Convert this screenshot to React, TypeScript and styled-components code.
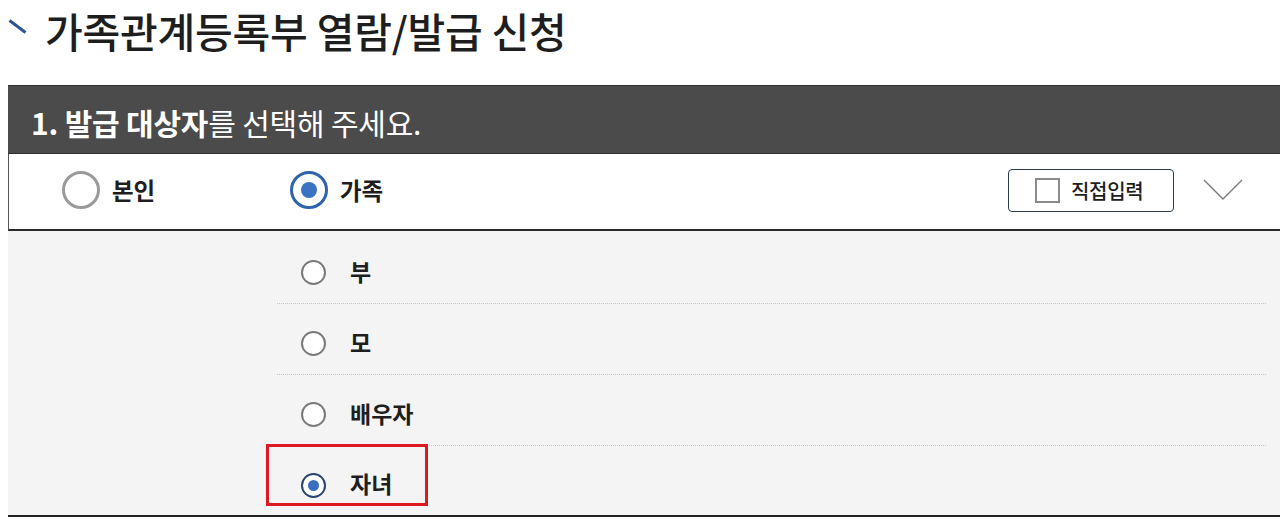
import React from "react";
import styled, { createGlobalStyle } from "styled-components";

const GlobalStyle = createGlobalStyle`
  html, body { margin: 0; padding: 0; background: #ffffff; }
  body {
    font-family: "Noto Sans CJK KR", "Noto Sans", "Liberation Sans", sans-serif;
    color: #1a1a1a;
  }
  * { box-sizing: border-box; }
`;

const Page = styled.div`
  width: 1280px;
  height: 519px;
  overflow: hidden;
  padding-left: 8px;
`;

const TitleRow = styled.div`
  height: 85px;
  display: flex;
  align-items: flex-start;
`;

const TitleMark = styled.svg`
  width: 20px;
  height: 16px;
  margin-top: 19px;
  margin-right: 17px;
  flex: none;
`;

const Title = styled.h1`
  margin: 0;
  font-size: 41px;
  line-height: 60px;
  font-weight: 500;
  letter-spacing: -0.2px;
  color: #1e1e1e;
  white-space: nowrap;
`;

const Section = styled.section`
  display: flex;
  flex-direction: column;
`;

const SectionHeader = styled.div`
  height: 69px;
  background: #4b4b4b;
  border-top: 1px solid #2e2e2e;
  border-bottom: 1px solid #2e2e2e;
  display: flex;
  align-items: center;
  padding-left: 23px;
  padding-top: 4px;
  color: #ffffff;
  font-size: 30px;
  font-weight: 400;
  letter-spacing: -0.2px;
  b { font-weight: 700; }
`;

const MainRow = styled.div`
  height: 77px;
  background: #ffffff;
  border-left: 1px solid #555;
  border-bottom: 2px solid #2a2a2a;
  display: flex;
  align-items: center;
  padding-left: 53px;
  padding-right: 37px;
  padding-bottom: 3px;
`;

const MainOption = styled.label`
  width: 228px;
  display: flex;
  align-items: center;
  gap: 12px;
  font-size: 23.5px;
  font-weight: 700;
  color: #1e1e1e;
`;

const BigRadio = styled.span<{ $checked?: boolean }>`
  width: 38px;
  height: 38px;
  border-radius: 50%;
  border: 3px solid ${(p) => (p.$checked ? "#2f63ad" : "#9a9a9a")};
  display: flex;
  align-items: center;
  justify-content: center;
  flex: none;
  &::after {
    content: "";
    display: ${(p) => (p.$checked ? "block" : "none")};
    width: 16px;
    height: 16px;
    border-radius: 50%;
    background: #3a72c4;
  }
`;

const DirectButton = styled.button`
  margin-left: auto;
  width: 166px;
  height: 43px;
  border: 1px solid #2c3d4f;
  border-radius: 4px;
  background: #ffffff;
  display: flex;
  align-items: center;
  padding: 0 0 0 26px;
  gap: 11px;
  font-family: inherit;
  font-size: 20px;
  font-weight: 500;
  color: #1e1e1e;
  letter-spacing: -0.3px;
`;

const CheckBox = styled.span`
  width: 25px;
  height: 25px;
  border: 2px solid #8a8a8a;
  background: #fff;
  flex: none;
`;

const Chevron = styled.svg`
  width: 40px;
  height: 22px;
  margin-left: 29px;
  flex: none;
`;

const SubPanel = styled.div`
  background: #f4f4f4;
  padding: 2px 14px 0 269px;
  border-bottom: 2px solid #222;
  display: flex;
  flex-direction: column;
`;

const SubRow = styled.div<{ $last?: boolean }>`
  position: relative;
  height: ${(p) => (p.$last ? "69px" : "71px")};
  border-bottom: ${(p) => (p.$last ? "none" : "1px dotted #c4c4c4")};
  display: flex;
  align-items: center;
  padding-top: 9px;
  padding-left: 24px;
  gap: 24px;
`;

const SubLabel = styled.span`
  font-size: 23px;
  font-weight: 700;
  color: #1e1e1e;
  margin-bottom: 4px;
`;

const SmallRadio = styled.span<{ $checked?: boolean }>`
  width: 25px;
  height: 25px;
  border-radius: 50%;
  border: 2px solid ${(p) => (p.$checked ? "#2b4470" : "#7a7a7a")};
  background: #ffffff;
  display: flex;
  align-items: center;
  justify-content: center;
  flex: none;
  &::after {
    content: "";
    display: ${(p) => (p.$checked ? "block" : "none")};
    width: 11px;
    height: 11px;
    border-radius: 50%;
    background: #3a6fc0;
  }
`;

const Highlight = styled.span`
  position: absolute;
  left: -11px;
  top: -2px;
  width: 162px;
  height: 62px;
  border: 3px solid #dd1a22;
  pointer-events: none;
`;

const subOptions = ["부", "모", "배우자", "자녀"];

export default function App() {
  return (
    <>
      <GlobalStyle />
      <Page>
        <TitleRow>
          <TitleMark viewBox="0 0 20 16">
            <line x1="1.5" y1="1.5" x2="17.5" y2="13.5" stroke="#2a5595" strokeWidth="3" strokeLinecap="butt" />
          </TitleMark>
          <Title>가족관계등록부 열람/발급 신청</Title>
        </TitleRow>
        <Section>
          <SectionHeader>
            <span>
              <b>1. 발급 대상자</b>를 선택해 주세요.
            </span>
          </SectionHeader>
          <MainRow>
            <MainOption>
              <BigRadio />
              본인
            </MainOption>
            <MainOption>
              <BigRadio $checked />
              가족
            </MainOption>
            <DirectButton type="button">
              <CheckBox />
              직접입력
            </DirectButton>
            <Chevron viewBox="0 0 40 22">
              <polyline points="1,1 20,20 39,1" fill="none" stroke="#7a7a7a" strokeWidth="1.4" />
            </Chevron>
          </MainRow>
          <SubPanel>
            {subOptions.map((label, i) => {
              const last = i === subOptions.length - 1;
              return (
                <SubRow key={label} $last={last}>
                  <SmallRadio $checked={last} />
                  <SubLabel>{label}</SubLabel>
                  {last && <Highlight />}
                </SubRow>
              );
            })}
          </SubPanel>
        </Section>
      </Page>
    </>
  );
}
